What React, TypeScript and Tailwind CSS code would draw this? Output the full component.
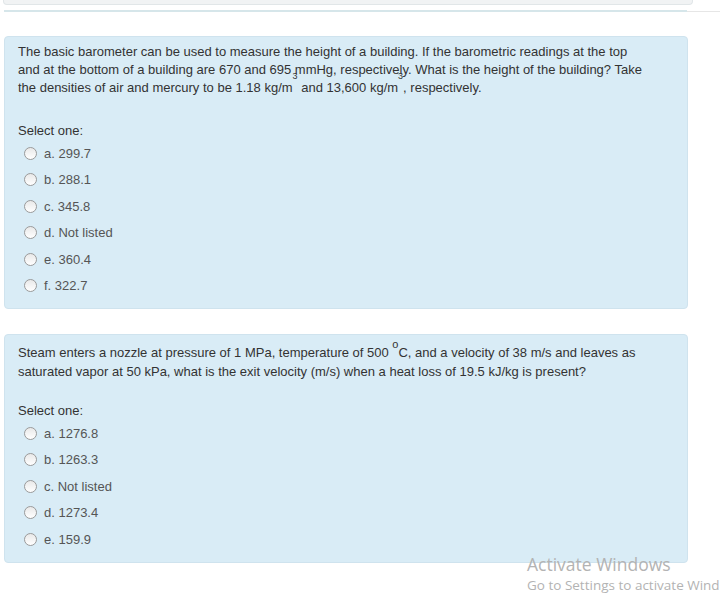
import React from "react";

function Radio() {
  return (
    <span className="inline-block w-[13px] h-[13px] rounded-full border border-[#9a9a9a] bg-gradient-to-b from-[#e9e9e9] to-white shrink-0" />
  );
}

function Option({ label }: { label: string }) {
  return (
    <div className="h-[26.5px] flex items-center pl-[6px] gap-[7px]">
      <Radio />
      <span className="text-[13px] text-[#555]">{label}</span>
    </div>
  );
}

export default function App() {
  const f = { fontFamily: '"Liberation Sans", Arial, sans-serif' };
  return (
    <div className="relative w-[720px] h-[600px] bg-white overflow-hidden" style={f}>
      {/* remnants of previous block */}
      <div className="ml-[3px] w-[690px] h-[5px] bg-[#f1f3f4] border-b border-x border-[#e1e6e8] rounded-b-[4px]" />
      <div className="mt-[5px] flex items-center">
        <div className="ml-[4px] w-[683px] h-[2px] bg-[#d6e6ea]" />
        <div className="flex-1 h-[1px] bg-[#e6e6e6]" />
      </div>

      {/* Card 1 */}
      <div className="mt-[24px] ml-[4px] w-[684px] h-[273px] bg-[#d9ecf6] border border-[#cfe3ee] rounded-[4px] pl-[13px] pr-[10px] pt-[6px]">
        <div className="text-[13px] leading-[18px] text-[#333]">
          The basic barometer can be used to measure the height of a building. If the barometric readings at the top
          <br />
          and at the bottom of a building are 670 and 695 mmHg, respectively. What is the height of the building? Take
          <br />
          the densities of air and mercury to be 1.18 kg/m
          <sup className="text-[9px] top-[-1.4em]">3</sup> and 13,600 kg/m
          <sup className="text-[9px] top-[-1.4em]">3</sup>, respectively.
        </div>
        <div className="mt-[25px] text-[13px] leading-[18px] text-[#333]">Select one:</div>
        <Option label="a. 299.7" />
        <Option label="b. 288.1" />
        <Option label="c. 345.8" />
        <Option label="d. Not listed" />
        <Option label="e. 360.4" />
        <Option label="f. 322.7" />
      </div>

      {/* Card 2 */}
      <div className="mt-[25px] ml-[4px] w-[684px] h-[229px] bg-[#d9ecf6] border border-[#cfe3ee] rounded-[4px] pl-[13px] pr-[10px] pt-[8px]">
        <div className="text-[13px] leading-[19px] text-[#333]">
          Steam enters a nozzle at pressure of 1 MPa, temperature of 500 <sup className="text-[11px] top-[-0.8em]">o</sup>C, and a velocity of 38 m/s and leaves as
          <br />
          saturated vapor at 50 kPa, what is the exit velocity (m/s) when a heat loss of 19.5 kJ/kg is present?
        </div>
        <div className="mt-[21px] text-[13px] leading-[18px] text-[#333]">Select one:</div>
        <Option label="a. 1276.8" />
        <Option label="b. 1263.3" />
        <Option label="c. Not listed" />
        <Option label="d. 1273.4" />
        <Option label="e. 159.9" />
      </div>

      {/* Windows watermark */}
      <div
        className="absolute left-[527px] top-[552px] text-[#b3b3b3] whitespace-nowrap"
        style={{ fontFamily: '"Open Sans", "Noto Sans", sans-serif' }}
      >
        <div className="text-[17.5px] leading-[24px]">Activate Windows</div>
        <div className="text-[13.5px] leading-[18px]">Go to Settings to activate Windows.</div>
      </div>
    </div>
  );
}
